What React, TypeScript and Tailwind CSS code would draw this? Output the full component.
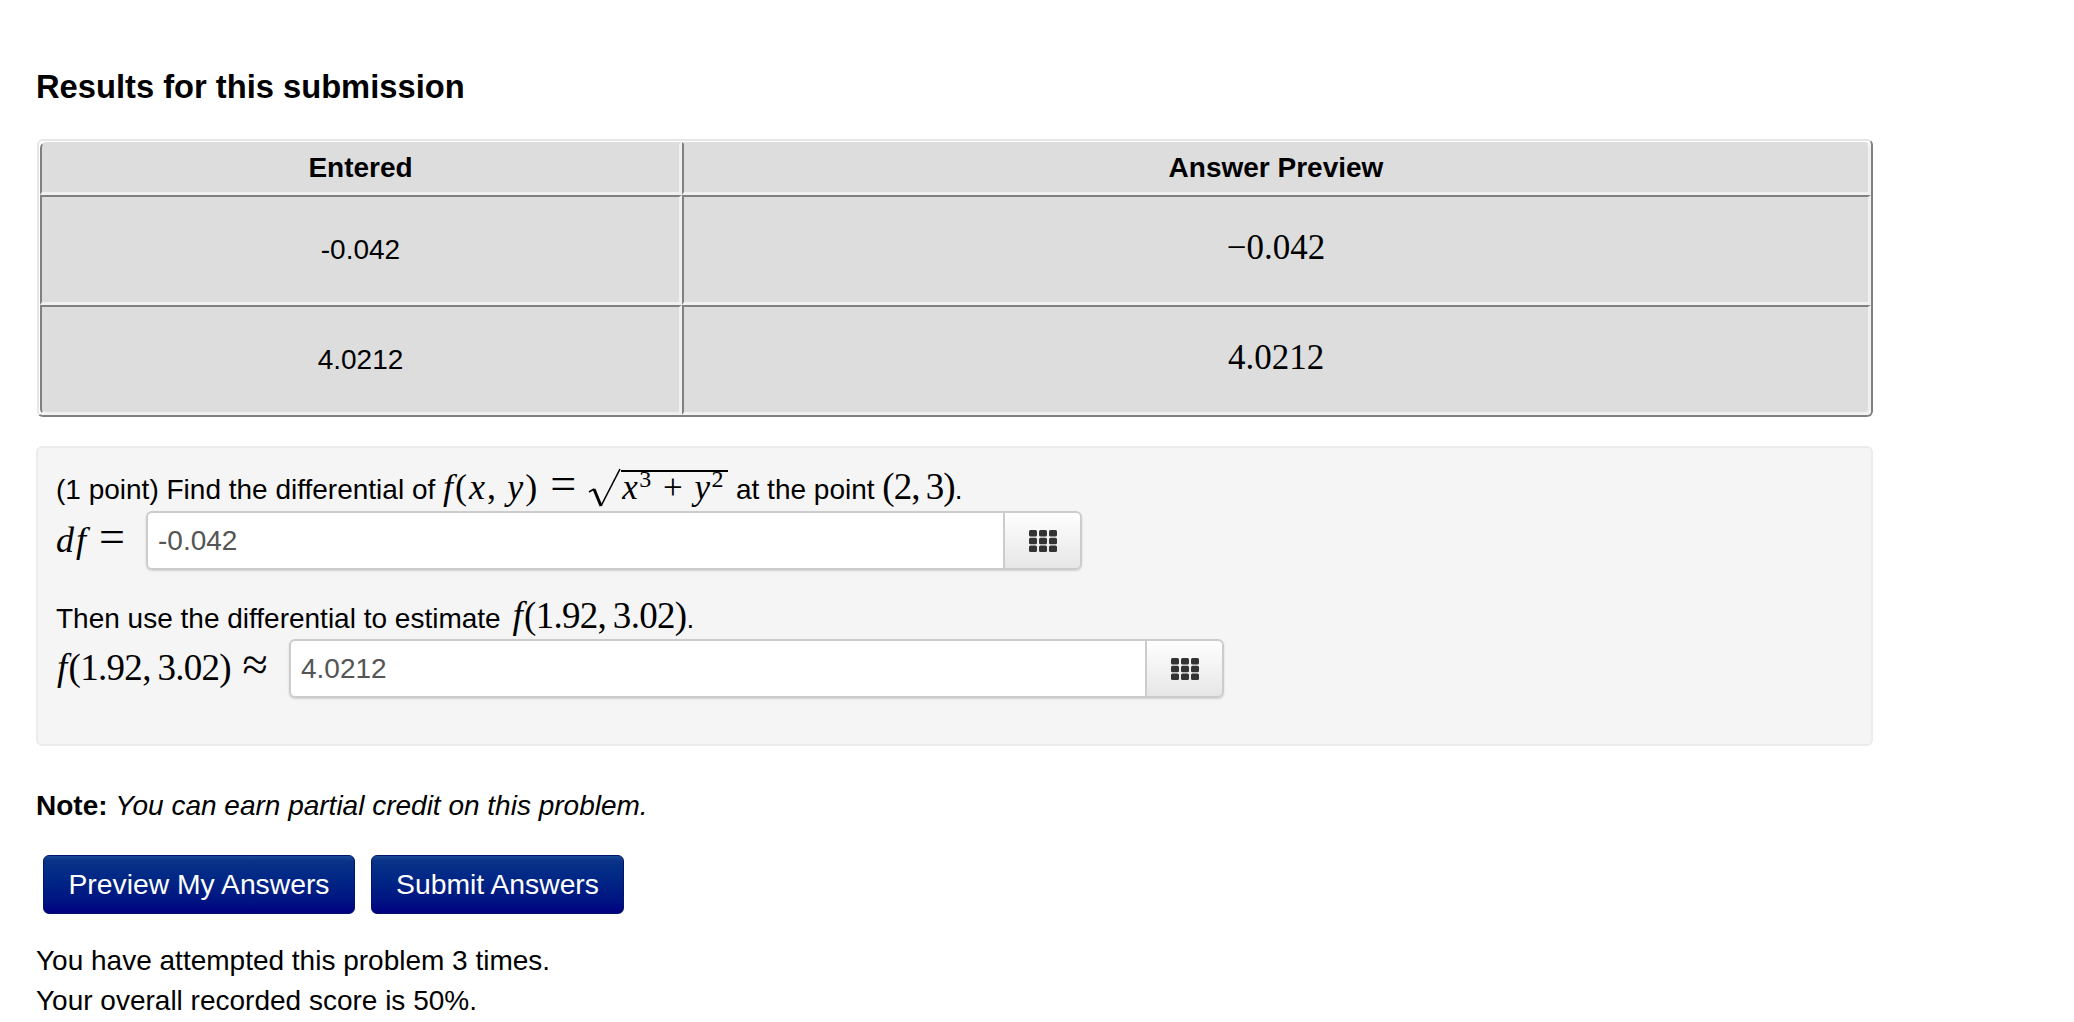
import React from 'react';

const serif = "font-['Liberation_Serif','DejaVu_Serif',serif]";

const KeypadIcon = () => (
  <svg width="28" height="22" viewBox="0 0 28 22" fill="#333">
    {[0, 7.75, 15.5].map((y) =>
      [0, 10, 20].map((x) => <rect key={`${x}-${y}`} x={x} y={y} width="8" height="6.5" rx="1.5" />)
    )}
  </svg>
);

const AnswerInput = ({ value, width }: { value: string; width: string }) => (
  <div className={`flex h-[59px] ${width} rounded-[6px] shadow-[0_1px_2px_rgba(0,0,0,0.15)]`}>
    <div className="flex flex-1 items-center rounded-l-[6px] border-2 border-r-0 border-[#ccc] bg-white pl-[10px] text-[28px] text-[#555]">
      {value}
    </div>
    <button className="flex w-[79px] items-center justify-center rounded-r-[6px] border-2 border-[#ccc] bg-gradient-to-b from-white to-[#e6e6e6]">
      <KeypadIcon />
    </button>
  </div>
);

const Cell = ({ children, className = '' }: { children: React.ReactNode; className?: string }) => (
  <div className={`flex items-center justify-center border-t-2 border-l-2 border-r-[3px] border-b-[3px] border-t-[#808080] border-l-[#808080] border-r-[#f0f0f0] border-b-[#f0f0f0] bg-[#ddd] ${className}`}>
    {children}
  </div>
);

const Eq = () => <span className="text-[46px] not-italic leading-[0]">=</span>;

const Radical = () => (
  <svg className="-mt-[4px] inline align-[-9px]" width="33" height="40" viewBox="0 0 33 40" fill="none" stroke="#000">
    <path d="M1 24 L6 21" strokeWidth="1.5" />
    <path d="M6 21 L13 38" strokeWidth="3" />
    <path d="M13 38 L32 1" strokeWidth="1.6" />
  </svg>
);

const btn =
  'h-[59px] rounded-[6px] border border-[#00156b] bg-gradient-to-b from-[#1a4a96] via-[#0a3388] via-[8%] to-[#000080] pb-px text-[28.3px] text-white';

export default function App() {
  return (
    <div className="min-h-[1022px] bg-white pl-[36px] pt-[67px] font-['Liberation_Sans',Arial,sans-serif] text-[28px] leading-[40px] text-black">
      <h3 className="text-[32.7px] font-bold leading-[40px]">Results for this submission</h3>

      <div className="ml-px mt-[32px] w-[1836px] rounded-[6px] border-2 border-t-[#e6e6e6] border-l-[#e6e6e6] border-r-[#808080] border-b-[#808080]">
        <div className="grid grid-cols-[642px_1fr] pl-px pt-px">
          <Cell className="h-[53px] rounded-tl-[6px] border-t-[#ddd] font-bold">Entered</Cell>
          <Cell className="h-[53px] rounded-tr-[6px] border-t-[#ddd] font-bold">Answer Preview</Cell>
          <Cell className="h-[110px]">-0.042</Cell>
          <Cell className={`h-[110px] pb-[4px] text-[35px] ${serif}`}>−0.042</Cell>
          <Cell className="h-[110px] rounded-bl-[6px]">4.0212</Cell>
          <Cell className={`h-[110px] rounded-br-[6px] pb-[4px] text-[35px] ${serif}`}>4.0212</Cell>
        </div>
      </div>

      <div className="mt-[29px] h-[300px] w-[1837px] rounded-[6px] border-2 border-[#ececec] bg-[#f5f5f5] px-[18px] pt-[22px]">
        <div className="h-[40px] whitespace-pre">
          <span>(1 point) Find the differential of </span>
          <span className={`text-[36px] leading-[0] tracking-[2px] ${serif}`}>
            <i>f</i>(<i>x</i>,&#8201;<i>y</i>) <Eq />
          </span>
          <span className="ml-[10px] leading-[0]"><Radical /></span>
          <span className={`-mt-[4px] inline-block w-[107px] border-t-2 border-black pl-[1px] text-[35px] italic leading-[32px] tracking-[1.5px] ${serif}`}>
            x<sup className="text-[24px] not-italic">3</sup><span className="not-italic"> + </span>y<sup className="text-[24px] not-italic">2</sup>
          </span>
          <span> at the point </span>
          <span className={`text-[37px] leading-[0] tracking-[-1px] ${serif}`}>(2,&#8201;3)</span>
          <span>.</span>
        </div>
        <div className="mt-px flex items-center">
          <span className={`w-[90px] whitespace-pre pb-[5px] text-[36px] leading-[0] tracking-[2px] ${serif}`}>
            <i>df</i> <Eq />
          </span>
          <AnswerInput value="-0.042" width="w-[936px]" />
        </div>

        <div className="mt-[29px] h-[40px] whitespace-pre">
          <span>Then use the differential to estimate </span>
          <span className={`ml-[4px] text-[37px] leading-[0] tracking-[-0.7px] ${serif}`}><i className="mr-[2px]">f</i>(1.92,&#8201;3.02)</span>
          <span>.</span>
        </div>
        <div className="flex items-center">
          <span className={`w-[233px] whitespace-pre pb-[5px] text-[37px] leading-[0] tracking-[-0.7px] ${serif}`}>
            <i className="ml-px mr-[2px]">f</i>(1.92,&#8201;3.02) <span className="ml-[3px] text-[46px] leading-[0]">≈</span>
          </span>
          <AnswerInput value="4.0212" width="w-[935px]" />
        </div>
      </div>

      <p className="mt-[40px]"><b>Note:</b> <i>You can earn partial credit on this problem.</i></p>

      <div className="mt-[29px] flex gap-[16px] pl-[7px]">
        <button className={`w-[312px] ${btn}`}>Preview My Answers</button>
        <button className={`w-[253px] ${btn}`}>Submit Answers</button>
      </div>

      <p className="mt-[27px]">You have attempted this problem 3 times.</p>
      <p>Your overall recorded score is 50%.</p>
    </div>
  );
}
